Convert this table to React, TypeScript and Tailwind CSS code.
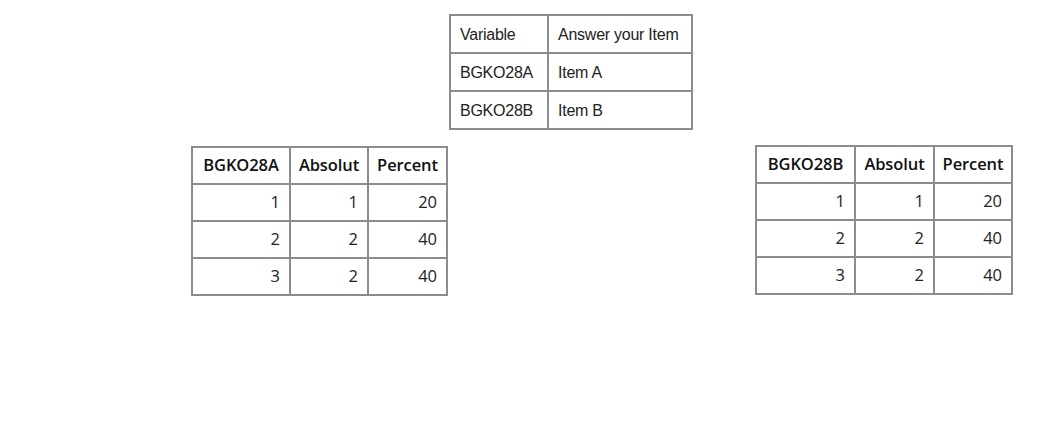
import React from "react";

const freq = [
  ["1", "1", "20"],
  ["2", "2", "40"],
  ["3", "2", "40"],
];

function FreqTable({ name, widths }: { name: string; widths: string[] }) {
  const th = "border-2 border-[#8c8c8c] h-[37px] px-[6px] text-center font-semibold text-[16.5px] text-[#111] tracking-[-0.1px] whitespace-nowrap";
  const td = "border-2 border-[#8c8c8c] h-[37px] px-[9px] text-right text-[16.5px] text-[#222]";
  return (
    <table className="border-collapse" style={{ fontFamily: '"Open Sans", sans-serif' }}>
      <thead>
        <tr>
          <th className={`${th} ${widths[0]}`}>{name}</th>
          <th className={`${th} ${widths[1]}`}>Absolut</th>
          <th className={`${th} ${widths[2]}`}>Percent</th>
        </tr>
      </thead>
      <tbody>
        {freq.map((r, i) => (
          <tr key={i}>
            {r.map((c, j) => (
              <td key={j} className={td}>
                {c}
              </td>
            ))}
          </tr>
        ))}
      </tbody>
    </table>
  );
}

export default function App() {
  const cell = "border-2 border-[#8c8c8c] h-[38px] px-[9px] pt-[1px] text-left text-[16px] text-[#222] tracking-[-0.25px] font-normal whitespace-nowrap";
  return (
    <div className="w-[1059px] h-[428px] bg-white overflow-hidden">
      <div className="pt-[14px] pl-[449px]">
        <table className="border-collapse" style={{ fontFamily: '"Liberation Sans", Arial, sans-serif' }}>
          <tbody>
            <tr>
              <td className={`${cell} w-[98px]`}>Variable</td>
              <td className={`${cell} w-[144px]`}>Answer your Item</td>
            </tr>
            <tr>
              <td className={cell}>BGKO28A</td>
              <td className={cell}>Item A</td>
            </tr>
            <tr>
              <td className={cell}>BGKO28B</td>
              <td className={cell}>Item B</td>
            </tr>
          </tbody>
        </table>
      </div>
      <div className="flex items-start pl-[191px] mt-[15px]">
        <div className="mt-[1px]">
          <FreqTable name="BGKO28A" widths={["w-[98px]", "w-[78px]", "w-[79px]"]} />
        </div>
        <div className="ml-[307px]">
          <FreqTable name="BGKO28B" widths={["w-[99px]", "w-[79px]", "w-[78px]"]} />
        </div>
      </div>
    </div>
  );
}
